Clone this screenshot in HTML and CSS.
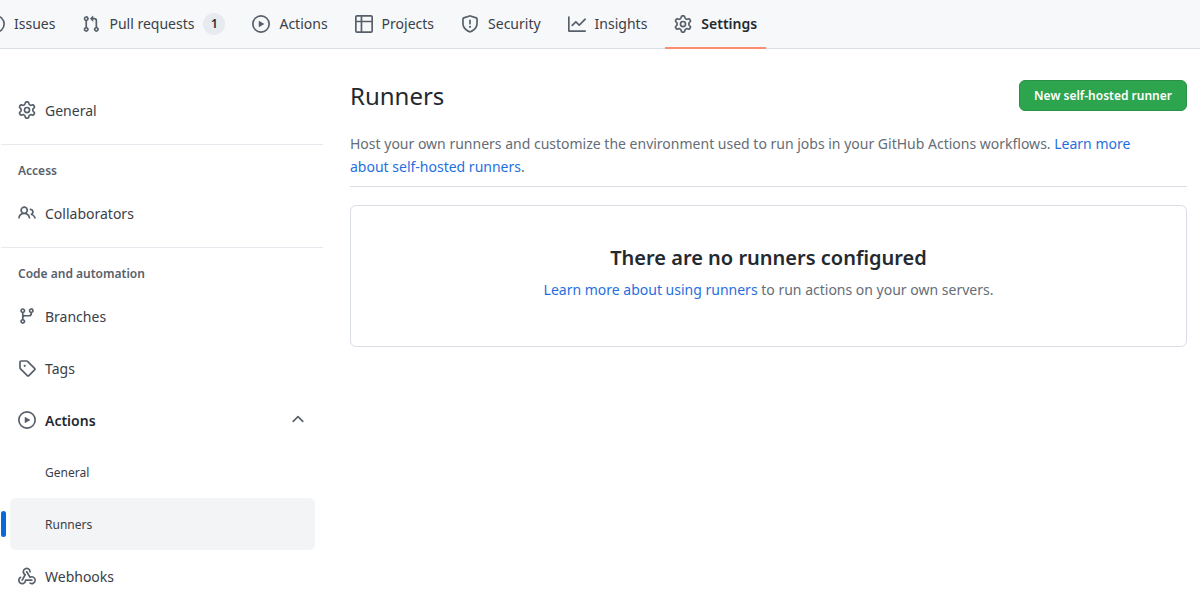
FILE: index.html
```html
<!DOCTYPE html>
<html lang="en">
<head>
<meta charset="UTF-8">
<meta name="viewport" content="width=device-width, initial-scale=1.0">
<title>Runners</title>
<link rel="stylesheet" href="styles.css">
</head>
<body>

<!-- shared icons -->
<svg class="icon-defs" aria-hidden="true">
    <symbol id="icon-gear" viewBox="0 0 16 16"><path fill-rule="evenodd" d="M7.429 1.525a6.593 6.593 0 011.142 0c.036.003.108.036.137.146l.289 1.105c.147.56.55.967.997 1.189.174.086.341.183.501.29.417.278.97.423 1.53.27l1.102-.303c.11-.03.175.016.195.046.219.31.41.641.573.989.014.031.022.11-.059.19l-.815.806c-.411.406-.562.957-.53 1.456a4.588 4.588 0 010 .582c-.032.499.119 1.05.53 1.456l.815.806c.08.08.073.159.059.19a6.494 6.494 0 01-.573.99c-.02.029-.086.074-.195.045l-1.103-.303c-.559-.153-1.112-.008-1.529.27-.16.107-.327.204-.5.29-.449.222-.851.628-.998 1.189l-.289 1.105c-.029.11-.101.143-.137.146a6.613 6.613 0 01-1.142 0c-.036-.003-.108-.037-.137-.146l-.289-1.105c-.147-.56-.55-.967-.997-1.189a4.502 4.502 0 01-.501-.29c-.417-.278-.97-.423-1.53-.27l-1.102.303c-.11.03-.175-.016-.195-.046a6.492 6.492 0 01-.573-.989c-.014-.031-.022-.11.059-.19l.815-.806c.411-.406.562-.957.53-1.456a4.587 4.587 0 010-.582c.032-.499-.119-1.05-.53-1.456l-.815-.806c-.08-.08-.073-.159-.059-.19a6.44 6.44 0 01.573-.99c.02-.029.086-.075.195-.045l1.103.303c.559.153 1.112.008 1.529-.27.16-.107.327-.204.5-.29.449-.222.851-.628.998-1.189l.289-1.105c.029-.11.101-.143.137-.146zM8 0c-.236 0-.47.01-.701.03-.743.065-1.29.615-1.458 1.261l-.29 1.106c-.017.066-.078.158-.211.224a5.994 5.994 0 00-.668.386c-.123.082-.233.09-.3.071L3.27 2.776c-.644-.177-1.392.02-1.82.63a7.977 7.977 0 00-.704 1.217c-.315.675-.111 1.422.363 1.891l.815.806c.05.048.098.147.088.294a6.084 6.084 0 000 .772c.01.147-.038.246-.088.294l-.815.806c-.474.469-.678 1.216-.363 1.891.2.428.436.835.704 1.218.428.609 1.176.806 1.82.63l1.103-.303c.066-.019.176-.011.299.071.213.143.436.272.668.386.133.066.194.158.212.224l.289 1.106c.169.646.715 1.196 1.458 1.26a8.094 8.094 0 001.402 0c.743-.064 1.29-.614 1.458-1.26l.29-1.106c.017-.066.078-.158.211-.224a5.98 5.98 0 00.668-.386c.123-.082.233-.09.3-.071l1.102.302c.644.177 1.392-.02 1.82-.63.268-.382.505-.789.704-1.217.315-.675.111-1.422-.364-1.891l-.814-.806c-.05-.048-.098-.147-.088-.294a6.1 6.1 0 000-.772c-.01-.147.039-.246.088-.294l.814-.806c.475-.469.679-1.216.364-1.891a7.992 7.992 0 00-.704-1.218c-.428-.609-1.176-.806-1.82-.63l-1.103.303c-.066.019-.176.011-.299-.071a5.991 5.991 0 00-.668-.386c-.133-.066-.194-.158-.212-.224L10.16 1.29C9.99.645 9.444.095 8.701.031A8.094 8.094 0 008 0zm1.5 8a1.5 1.5 0 11-3 0 1.5 1.5 0 013 0zM11 8a3 3 0 11-6 0 3 3 0 016 0z"/></symbol>
    <symbol id="icon-play" viewBox="0 0 16 16"><path fill-rule="evenodd" d="M1.5 8a6.5 6.5 0 1113 0 6.5 6.5 0 01-13 0zM8 0a8 8 0 100 16A8 8 0 008 0zM6.379 5.227A.25.25 0 006 5.442v5.117a.25.25 0 00.379.214l4.264-2.559a.25.25 0 000-.428L6.379 5.227z"/></symbol>
</svg>

<nav class="topnav" aria-label="Repository">
    <a class="tab" href="#">
        <svg class="icon" viewBox="0 0 16 16"><path fill-rule="evenodd" d="M8 9.5a1.5 1.5 0 100-3 1.5 1.5 0 000 3zM8 0a8 8 0 100 16A8 8 0 008 0zM1.5 8a6.5 6.5 0 1113 0 6.5 6.5 0 01-13 0z"/></svg>
        Issues
    </a>
    <a class="tab" href="#">
        <svg class="icon" viewBox="0 0 16 16"><path fill-rule="evenodd" d="M7.177 3.073L9.573.677A.25.25 0 0110 .854v4.792a.25.25 0 01-.427.177L7.177 3.427a.25.25 0 010-.354zM3.75 2.5a.75.75 0 100 1.5.75.75 0 000-1.5zm-2.25.75a2.25 2.25 0 113 2.122v5.256a2.251 2.251 0 11-1.5 0V5.372A2.25 2.25 0 011.5 3.25zM11 2.5h-1V4h1a1 1 0 011 1v5.628a2.251 2.251 0 101.5 0V5A2.5 2.5 0 0011 2.5zm1 10.25a.75.75 0 111.5 0 .75.75 0 01-1.5 0zM3.75 12a.75.75 0 100 1.5.75.75 0 000-1.5z"/></svg>
        Pull requests
        <span class="counter">1</span>
    </a>
    <a class="tab" href="#">
        <svg class="icon"><use href="#icon-play"/></svg>
        Actions
    </a>
    <a class="tab" href="#">
        <svg class="icon" viewBox="0 0 16 16"><path fill-rule="evenodd" d="M0 1.75C0 .784.784 0 1.75 0h12.5C15.216 0 16 .784 16 1.75v12.5A1.75 1.75 0 0114.25 16H1.75A1.75 1.75 0 010 14.25V1.75zM1.5 6.5v7.75c0 .138.112.25.25.25H5v-8H1.5zM5 5H1.5V1.75a.25.25 0 01.25-.25H5V5zm1.5 1.5v8h7.75a.25.25 0 00.25-.25V6.5h-8zm8-1.5h-8V1.5h7.75a.25.25 0 01.25.25V5z"/></svg>
        Projects
    </a>
    <a class="tab" href="#">
        <svg class="icon" viewBox="0 0 16 16"><path fill-rule="evenodd" d="M7.467.133a1.75 1.75 0 011.066 0l5.25 1.68A1.75 1.75 0 0115 3.48V7c0 1.566-.32 3.182-1.303 4.682-.983 1.498-2.585 2.813-5.032 3.855a1.7 1.7 0 01-1.33 0c-2.447-1.042-4.049-2.357-5.032-3.855C1.32 10.182 1 8.566 1 7V3.48a1.75 1.75 0 011.217-1.667l5.25-1.68zm.61 1.429a.25.25 0 00-.153 0l-5.25 1.68a.25.25 0 00-.174.238V7c0 1.358.275 2.666 1.057 3.86.784 1.194 2.121 2.34 4.366 3.297a.2.2 0 00.154 0c2.245-.956 3.582-2.104 4.366-3.298C13.225 9.666 13.5 8.36 13.5 7V3.48a.25.25 0 00-.174-.237l-5.25-1.68zM9 10.5a1 1 0 11-2 0 1 1 0 012 0zm-.25-5.75a.75.75 0 10-1.5 0v3a.75.75 0 001.5 0v-3z"/></svg>
        Security
    </a>
    <a class="tab" href="#">
        <svg class="icon" viewBox="0 0 16 16"><path fill-rule="evenodd" d="M1.5 1.75a.75.75 0 00-1.5 0v12.5c0 .414.336.75.75.75h14.5a.75.75 0 000-1.5H1.5V1.75zm14.28 2.53a.75.75 0 00-1.06-1.06L10 7.94 7.53 5.47a.75.75 0 00-1.06 0L3.22 8.72a.75.75 0 001.06 1.06L7 7.06l2.47 2.47a.75.75 0 001.06 0l5.25-5.25z"/></svg>
        Insights
    </a>
    <a class="tab tab-active" href="#" aria-current="page">
        <svg class="icon"><use href="#icon-gear"/></svg>
        Settings
    </a>
</nav>

<div class="layout">
    <nav class="sidebar" aria-label="Settings">
        <ul class="menu">
            <li><a class="menu-item" href="#"><svg class="icon"><use href="#icon-gear"/></svg>General</a></li>
        </ul>

        <section class="group">
            <h2 class="group-title">Access</h2>
            <ul class="menu">
                <li><a class="menu-item" href="#"><svg class="icon" viewBox="0 0 16 16"><path fill-rule="evenodd" d="M5.5 3.5a2 2 0 100 4 2 2 0 000-4zM2 5.5a3.5 3.5 0 115.898 2.549 5.507 5.507 0 013.034 4.084.75.75 0 11-1.482.235 4.001 4.001 0 00-7.9 0 .75.75 0 01-1.482-.236A5.507 5.507 0 013.102 8.05 3.49 3.49 0 012 5.5zM11 4a.75.75 0 100 1.5 1.5 1.5 0 01.666 2.844.75.75 0 00-.416.672v.352a.75.75 0 00.574.73c1.2.289 2.162 1.2 2.522 2.372a.75.75 0 101.434-.44 5.01 5.01 0 00-2.56-3.012A3 3 0 0011 4z"/></svg>Collaborators</a></li>
            </ul>
        </section>

        <section class="group">
            <h2 class="group-title">Code and automation</h2>
            <ul class="menu">
                <li><a class="menu-item" href="#"><svg class="icon" viewBox="0 0 16 16"><path fill-rule="evenodd" d="M11.75 2.5a.75.75 0 100 1.5.75.75 0 000-1.5zm-2.25.75a2.25 2.25 0 113 2.122V6A2.5 2.5 0 0110 8.5H6a1 1 0 00-1 1v1.128a2.251 2.251 0 11-1.5 0V5.372a2.25 2.25 0 111.5 0v1.836A2.492 2.492 0 016 7h4a1 1 0 001-1v-.628A2.25 2.25 0 019.5 3.25zM4.25 12a.75.75 0 100 1.5.75.75 0 000-1.5zM3.5 3.25a.75.75 0 111.5 0 .75.75 0 01-1.5 0z"/></svg>Branches</a></li>
                <li><a class="menu-item" href="#"><svg class="icon" viewBox="0 0 16 16"><path fill-rule="evenodd" d="M2.5 7.775V2.75a.25.25 0 01.25-.25h5.025a.25.25 0 01.177.073l6.25 6.25a.25.25 0 010 .354l-5.025 5.025a.25.25 0 01-.354 0l-6.25-6.25a.25.25 0 01-.073-.177zm-1.5 0V2.75C1 1.784 1.784 1 2.75 1h5.025c.464 0 .91.184 1.238.513l6.25 6.25a1.75 1.75 0 010 2.474l-5.026 5.026a1.75 1.75 0 01-2.474 0l-6.25-6.25A1.75 1.75 0 011 7.775zM6 5a1 1 0 100 2 1 1 0 000-2z"/></svg>Tags</a></li>
                <li>
                    <button class="menu-item menu-toggle" type="button" aria-expanded="true">
                        <svg class="icon"><use href="#icon-play"/></svg>
                        Actions
                        <svg class="icon chevron" viewBox="0 0 16 16"><path fill-rule="evenodd" d="M3.22 9.78a.75.75 0 010-1.06l4.25-4.25a.75.75 0 011.06 0l4.25 4.25a.75.75 0 01-1.06 1.06L8 6.06 4.28 9.78a.75.75 0 01-1.06 0z"/></svg>
                    </button>
                    <ul class="menu">
                        <li><a class="menu-item sub-item" href="#">General</a></li>
                        <li><a class="menu-item sub-item selected" href="#" aria-current="page">Runners</a></li>
                    </ul>
                </li>
                <li><a class="menu-item" href="#"><svg class="icon" viewBox="0 0 16 16"><path d="M5.5 4.25a2.25 2.25 0 014.5 0 .75.75 0 001.5 0 3.75 3.75 0 10-6.14 2.889l-2.272 4.258a.75.75 0 001.324.706L7 7.25a.75.75 0 00-.309-1.015A2.25 2.25 0 015.5 4.25z"/><path d="M7.364 3.607a.75.75 0 011.03.257l2.608 4.349a3.75 3.75 0 11-.628 6.785.75.75 0 01.752-1.299 2.25 2.25 0 10-.033-3.88.75.75 0 01-1.03-.256L7.107 4.636a.75.75 0 01.257-1.03z"/><path d="M2.9 8.776A.75.75 0 012.625 9.8 2.25 2.25 0 106 11.75a.75.75 0 01.75-.751h5.5a.75.75 0 010 1.5H7.425a3.751 3.751 0 11-5.55-3.998.75.75 0 011.024.274z"/></svg>Webhooks</a></li>
            </ul>
        </section>
    </nav>

    <main class="content">
        <div class="heading">
            <h1>Runners</h1>
            <button class="btn-primary" type="button">New self-hosted runner</button>
        </div>
        <p class="intro">Host your own runners and customize the environment used to run jobs in your GitHub Actions workflows. <a href="#">Learn more about self-hosted runners</a>.</p>
        <div class="blank-box">
            <h3>There are no runners configured</h3>
            <p><a href="#">Learn more about using runners</a> to run actions on your own servers.</p>
        </div>
    </main>
</div>

</body>
</html>
```
FILE: styles.css
```css
* {
    box-sizing: border-box;
}
body {
    margin: 0;
    font-family: "Noto Sans", "Open Sans", sans-serif;
    font-size: 14px;
    line-height: 23px;
    color: #24292f;
    background-color: #fff;
    overflow: hidden;
}
a {
    color: #1f6fe0;
    text-decoration: none;
}
h1, h2, h3, p, ul {
    margin: 0;
    padding: 0;
}
.icon-defs {
    display: none;
}
.icon {
    width: 18px;
    height: 18px;
    flex-shrink: 0;
    fill: #57606a;
}

/* top tabs */
.topnav {
    display: flex;
    gap: 9px;
    height: 49px;
    padding-right: 13px;
    margin-left: -22px;
    background-color: #f6f8fa;
    border-bottom: 1px solid #d8dee4;
}
.tab {
    display: flex;
    align-items: center;
    gap: 9px;
    height: 49px;
    padding: 0 9px;
    color: #3a4047;
    white-space: nowrap;
    border-bottom: 2px solid transparent;
}
.tab-active {
    color: #24292f;
    font-weight: 600;
    border-bottom-color: #fd8c73;
}
.counter {
    min-width: 22px;
    padding: 0 7px;
    border-radius: 11px;
    background-color: #e7eaef;
    color: #24292f;
    font-size: 12px;
    font-weight: 600;
    line-height: 22px;
    text-align: center;
}

.layout {
    display: grid;
    grid-template-columns: 322px minmax(0, 1fr);
    gap: 27px;
    padding: 29px 13px 0 1px;
}

/* sidebar */
.sidebar {
    padding-top: 6px;
}
.menu {
    list-style: none;
}
.menu-item {
    display: flex;
    align-items: center;
    gap: 9px;
    height: 52px;
    margin: 0 8px 0 9px;
    padding: 0 8px;
    border-radius: 6px;
    color: #3a4047;
}
.menu-toggle {
    width: calc(100% - 17px);
    border: 0;
    background: none;
    color: #24292f;
    font: inherit;
    font-weight: 600;
    cursor: pointer;
}
.chevron {
    margin-left: auto;
}
.sub-item {
    padding-left: 35px;
    font-size: 12px;
}
.selected {
    position: relative;
    background-color: #f3f4f6;
}
.selected::before {
    content: "";
    position: absolute;
    left: -9px;
    top: 13px;
    width: 5px;
    height: 26px;
    border-radius: 3px;
    background-color: #0969da;
}
.group {
    margin-top: 8px;
    border-top: 1px solid #e6e9ee;
}
.group-title {
    padding: 17px 17px 7px;
    color: #57606a;
    font-size: 12px;
    font-weight: 600;
    line-height: 18px;
}

/* main column */
.heading {
    display: flex;
    align-items: center;
    justify-content: space-between;
    margin-bottom: 19px;
}
.heading h1 {
    font-size: 24px;
    font-weight: 400;
    line-height: 35px;
}
.btn-primary {
    height: 31px;
    padding: 0 14px;
    border: 1px solid #2a9147;
    border-radius: 6px;
    background-color: #2da44e;
    color: #fff;
    font-family: inherit;
    font-size: 12px;
    font-weight: 600;
    white-space: nowrap;
    cursor: pointer;
}
.intro {
    padding: 0 36px 8px 0;
    border-bottom: 1px solid #d8dee4;
    color: #656d76;
}
.blank-box {
    margin-top: 18px;
    padding: 36px 36px 45px;
    border: 1px solid #d8dee4;
    border-radius: 6px;
    text-align: center;
    color: #656d76;
}
.blank-box h3 {
    margin-bottom: 4px;
    color: #24292f;
    font-size: 20px;
    font-weight: 600;
    line-height: 32px;
}
```
